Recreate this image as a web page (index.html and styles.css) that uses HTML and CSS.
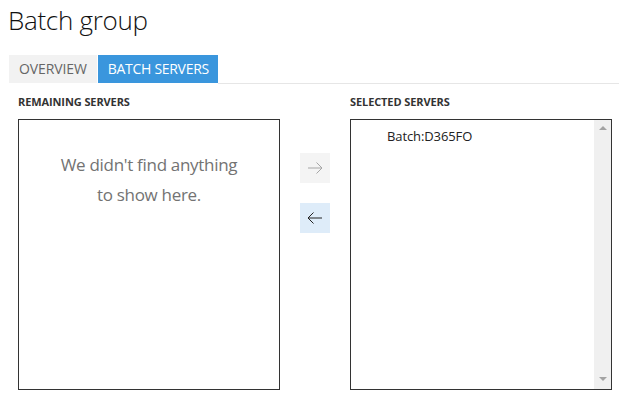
FILE: index.html
```html
<!DOCTYPE html>
<html>
<head>
<meta charset="utf-8">
<link rel="stylesheet" href="styles.css">
</head>
<body>
<div class="page">
  <h1 class="title">Batch group</h1>
  <div class="tabs">
    <div class="tab">OVERVIEW</div>
    <div class="tab active">BATCH SERVERS</div>
    <div class="tab-fill"></div>
  </div>
  <div class="panes">
    <div class="col">
      <div class="label">REMAINING SERVERS</div>
      <div class="box empty">
        <div class="empty-msg">We didn't find anything<br>to show here.</div>
      </div>
    </div>
    <div class="buttons">
      <div class="btn add">
        <svg width="16" height="12" viewBox="0 0 16 12"><path d="M1 6H15M9.5 0.5L15 6L9.5 11.5" fill="none" stroke="#a6a6a6" stroke-width="1"/></svg>
      </div>
      <div class="btn remove">
        <svg width="16" height="12" viewBox="0 0 16 12"><path d="M15 6H1M6.5 0.5L1 6L6.5 11.5" fill="none" stroke="#222" stroke-width="1"/></svg>
      </div>
    </div>
    <div class="col">
      <div class="label">SELECTED SERVERS</div>
      <div class="box list">
        <div class="items">
          <div class="item">Batch:D365FO</div>
        </div>
        <div class="scrollbar">
          <div class="arrow up"></div>
          <div class="arrow down"></div>
        </div>
      </div>
    </div>
  </div>
</div>
</body>
</html>
```
FILE: styles.css
```css
html, body {
  margin: 0;
  padding: 0;
  background: #fff;
}
body {
  font-family: "Open Sans", "Noto Sans", sans-serif;
  color: #222;
}
.page {
  width: 619px;
  height: 394px;
  overflow: hidden;
}
.title {
  margin: 0;
  padding: 3px 0 0 8px;
  font-weight: 300;
  font-size: 26px;
  line-height: 34px;
  color: #111;
  letter-spacing: -0.3px;
}
.tabs {
  display: flex;
  margin: 18px 0 0 9px;
  height: 29px;
}
.tab {
  height: 28px;
  line-height: 28px;
  padding: 0 10px;
  font-size: 14px;
  color: #666;
  background: #f2f2f2;
  letter-spacing: -0.1px;
}
.tab.active {
  background: #3a96dd;
  color: #fff;
  margin-left: 1px;
  padding: 0 9px 0 10px;
  letter-spacing: -0.3px;
}
.tab-fill {
  flex: 1;
  height: 28px;
  border-bottom: 1px solid #e6e6e6;
}
.panes {
  display: flex;
  padding-left: 18px;
  margin-top: 11px;
}
.col {
  width: 262px;
  display: flex;
  flex-direction: column;
}
.label {
  font-size: 11px;
  font-weight: 700;
  color: #333;
  line-height: 14px;
  height: 14px;
  letter-spacing: -0.1px;
}
.box {
  margin-top: 10px;
  height: 269px;
  border: 1px solid #333;
}
.empty {
  display: flex;
  justify-content: center;
}
.empty-msg {
  margin-top: 30px;
  text-align: center;
  font-size: 17px;
  line-height: 30px;
  color: #737373;
  font-weight: 400;
  letter-spacing: -0.3px;
}
.buttons {
  width: 30px;
  margin: 0 20px;
  padding-top: 58px;
  display: flex;
  flex-direction: column;
  gap: 20px;
}
.btn {
  width: 30px;
  height: 30px;
  display: flex;
  align-items: center;
  justify-content: center;
}
.btn.add { background: #f4f4f4; }
.btn.remove { background: #deecf9; }
.list {
  display: flex;
}
.items {
  flex: 1;
  padding: 7px 0 0 36px;
}
.item {
  font-size: 13px;
  line-height: 18px;
  color: #222;
  letter-spacing: -0.1px;
}
.scrollbar {
  width: 17px;
  background: #f0f0f0;
  display: flex;
  flex-direction: column;
  justify-content: space-between;
  align-items: center;
  padding: 6px 0 8px;
}
.arrow {
  width: 0;
  height: 0;
  border-left: 4px solid transparent;
  border-right: 4px solid transparent;
}
.arrow.up { border-bottom: 4px solid #a3a3a3; }
.arrow.down { border-top: 4px solid #a3a3a3; }
```
